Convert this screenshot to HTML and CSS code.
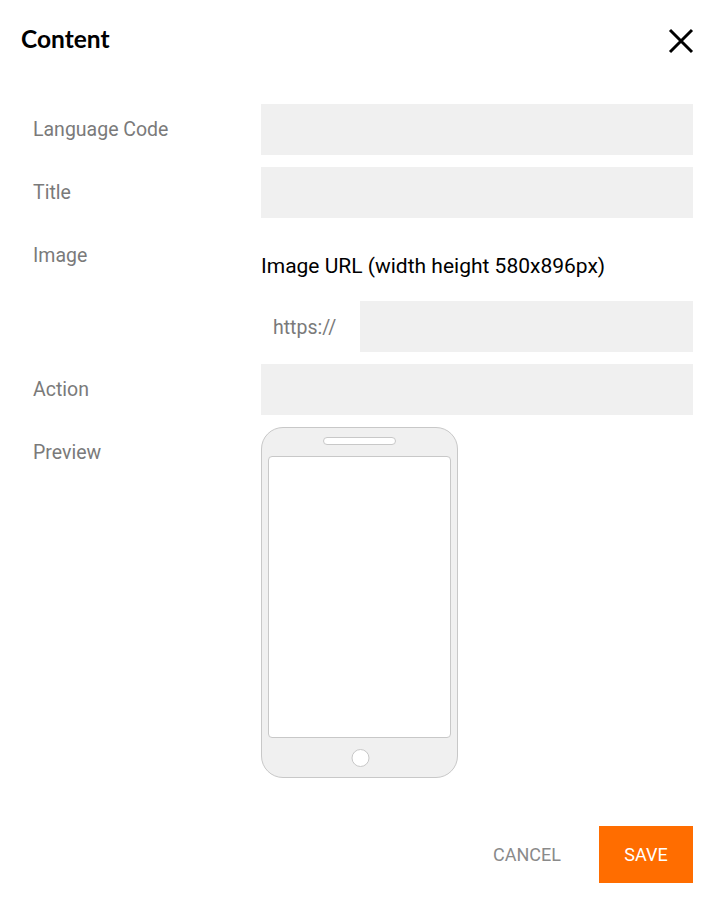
FILE: index.html
```html
<!DOCTYPE html>
<html lang="en">
<head>
  <meta charset="UTF-8">
  <meta name="viewport" content="width=device-width, initial-scale=1.0">
  <title>Content</title>
  <link rel="stylesheet" href="styles.css">
</head>
<body>
  <div class="dialog">
    <!-- Header -->
    <div class="dialog-header">
      <h1>Content</h1>
      <button class="close-button" aria-label="Close">
        <svg width="26" height="26" viewBox="0 0 26 26">
          <path d="M2 2 L24 24 M24 2 L2 24" stroke="#000" stroke-width="3" fill="none"/>
        </svg>
      </button>
    </div>

    <!-- Form -->
    <div class="form">
      <div class="form-row">
        <label class="form-label">Language Code</label>
        <input class="form-input" type="text">
      </div>
      <div class="form-row">
        <label class="form-label">Title</label>
        <input class="form-input" type="text">
      </div>
      <div class="form-row">
        <label class="form-label">Image</label>
        <div class="image-field">
          <div class="image-hint">Image URL (width height 580x896px)</div>
          <div class="url-group">
            <span class="url-prefix">https://</span>
            <input class="form-input" type="text">
          </div>
        </div>
      </div>
      <div class="form-row">
        <label class="form-label">Action</label>
        <input class="form-input" type="text">
      </div>
      <div class="form-row">
        <label class="form-label">Preview</label>
        <div class="phone">
          <div class="phone-speaker"></div>
          <div class="phone-screen"></div>
          <div class="phone-home"></div>
        </div>
      </div>
    </div>

    <!-- Footer -->
    <div class="dialog-footer">
      <button class="cancel-button">CANCEL</button>
      <button class="save-button">SAVE</button>
    </div>
  </div>
</body>
</html>
```

FILE: styles.css
```css
/* General */
body {
  font-family: Roboto, Arial, sans-serif;
  margin: 0;
  padding: 0;
  background-color: #ffffff;
}

.dialog {
  padding: 24px 22px 21px 21px;
}

/* Header */
.dialog-header {
  display: flex;
  justify-content: space-between;
  align-items: flex-start;
  height: 80px;
}

.dialog-header h1 {
  margin: 0;
  font-family: Lato, sans-serif;
  font-size: 24.5px;
  line-height: 30px;
  font-weight: 700;
  color: #000000;
}

.close-button {
  display: block;
  margin-top: 4px;
  margin-right: -1px;
  padding: 0;
  border: none;
  background: none;
  cursor: pointer;
}

.close-button svg {
  display: block;
}

/* Form */
.form {
  display: flex;
  flex-direction: column;
  gap: 12px;
}

.form-row {
  display: flex;
  align-items: flex-start;
}

.form-label {
  flex: 0 0 240px;
  padding-left: 12px;
  box-sizing: border-box;
  line-height: 51px;
  font-size: 19.5px;
  color: #7a7a7a;
}

.form-input {
  flex: 1;
  min-width: 0;
  height: 51px;
  padding: 0 12px;
  box-sizing: border-box;
  border: none;
  border-radius: 0;
  background-color: #f0f0f0;
}

.image-field {
  flex: 1;
  min-width: 0;
}

.image-hint {
  height: 71px;
  padding-top: 11px;
  box-sizing: border-box;
  line-height: 51px;
  font-size: 21px;
  color: #000000;
}

.url-group {
  display: flex;
  align-items: center;
}

.url-prefix {
  flex: 0 0 99px;
  padding-top: 2px;
  padding-left: 12px;
  box-sizing: border-box;
  font-size: 19.5px;
  color: #7a7a7a;
}

/* Phone */
.phone {
  display: flex;
  flex-direction: column;
  align-items: center;
  width: 197px;
  height: 351px;
  box-sizing: border-box;
  border: 1px solid #c8c8c8;
  border-radius: 22px;
  background-color: #f0f0f0;
}

.phone-speaker {
  width: 73px;
  height: 8px;
  margin-top: 9px;
  box-sizing: border-box;
  border: 1px solid #c8c8c8;
  border-radius: 4px;
  background-color: #ffffff;
}

.phone-screen {
  width: 183px;
  height: 282px;
  margin-top: 11px;
  box-sizing: border-box;
  border: 1px solid #c8c8c8;
  border-radius: 4px;
  background-color: #ffffff;
}

.phone-home {
  width: 18px;
  height: 18px;
  margin-top: 11px;
  box-sizing: border-box;
  border: 1px solid #c8c8c8;
  border-radius: 50%;
  background-color: #ffffff;
  transform: translateX(0.5px);
}

/* Footer */
.dialog-footer {
  display: flex;
  justify-content: flex-end;
  align-items: center;
  gap: 25px;
  margin-top: 48px;
}

.cancel-button,
.save-button {
  height: 57px;
  padding: 0;
  border: none;
  font-family: Roboto, Arial, sans-serif;
  font-size: 18px;
  cursor: pointer;
}

.cancel-button {
  width: 94px;
  background: none;
  color: #8a8a8a;
}

.save-button {
  width: 94px;
  font-weight: 400;
  background-color: #ff6d00;
  color: #ffffff;
}
```
